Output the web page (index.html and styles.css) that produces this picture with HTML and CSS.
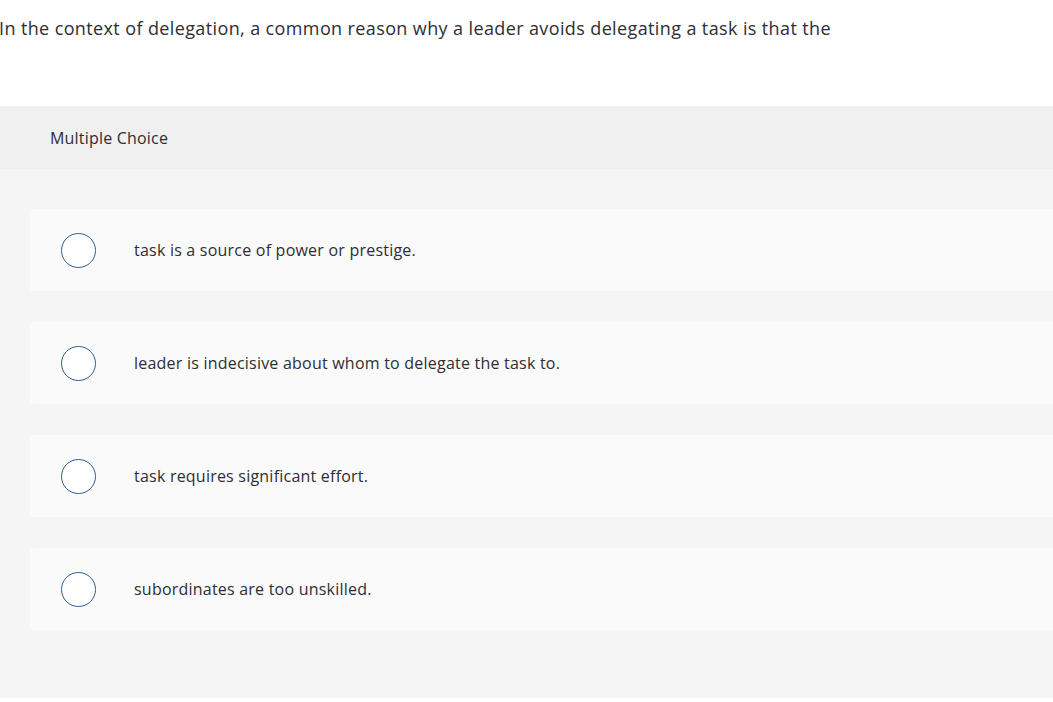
FILE: index.html
```html
<!DOCTYPE html>
<html>
<head>
<meta charset="utf-8">
<link rel="stylesheet" href="styles.css">
</head>
<body>
<div class="question">In the context of delegation, a common reason why a leader avoids delegating a task is that the</div>
<div class="answers">
  <div class="type-bar">Multiple Choice</div>
  <div class="choices">
    <label class="choice"><span class="radio"></span><span class="choice-text">task is a source of power or prestige.</span></label>
    <label class="choice"><span class="radio"></span><span class="choice-text">leader is indecisive about whom to delegate the task to.</span></label>
    <label class="choice"><span class="radio"></span><span class="choice-text">task requires significant effort.</span></label>
    <label class="choice"><span class="radio"></span><span class="choice-text">subordinates are too unskilled.</span></label>
  </div>
</div>
</body>
</html>
```

FILE: styles.css
```css
html, body {
  margin: 0;
  padding: 0;
  background: #ffffff;
}
body {
  font-family: "Open Sans", "Liberation Sans", sans-serif;
  color: #2e2e35;
  width: 1053px;
  height: 702px;
  overflow: hidden;
}
.question {
  font-size: 18px;
  line-height: 24px;
  padding: 16px 0 0 0;
  margin-left: -1px;
  height: 90px;
  box-sizing: border-box;
  white-space: nowrap;
  letter-spacing: 0.38px;
}
.answers {
  margin-top: 16px;
  background: #f5f5f5;
  height: 592px;
}
.type-bar {
  background: #f0f0f0;
  height: 63px;
  padding-left: 50px;
  display: flex;
  align-items: center;
  font-size: 16px;
  letter-spacing: 0.2px;
}
.choices {
  padding: 40px 0 0 30px;
  display: flex;
  flex-direction: column;
  gap: 31px;
}
.choice {
  height: 82px;
  background: #fafafa;
  border-radius: 3px 0 0 3px;
  display: flex;
  align-items: center;
  padding-left: 31px;
  font-size: 16px;
  letter-spacing: 0.22px;
}
.radio {
  width: 35px;
  height: 35px;
  box-sizing: border-box;
  border: 1.5px solid #2c5d94;
  border-radius: 50%;
  background: #ffffff;
  flex: none;
}
.choice-text {
  margin-left: 38px;
}
```
